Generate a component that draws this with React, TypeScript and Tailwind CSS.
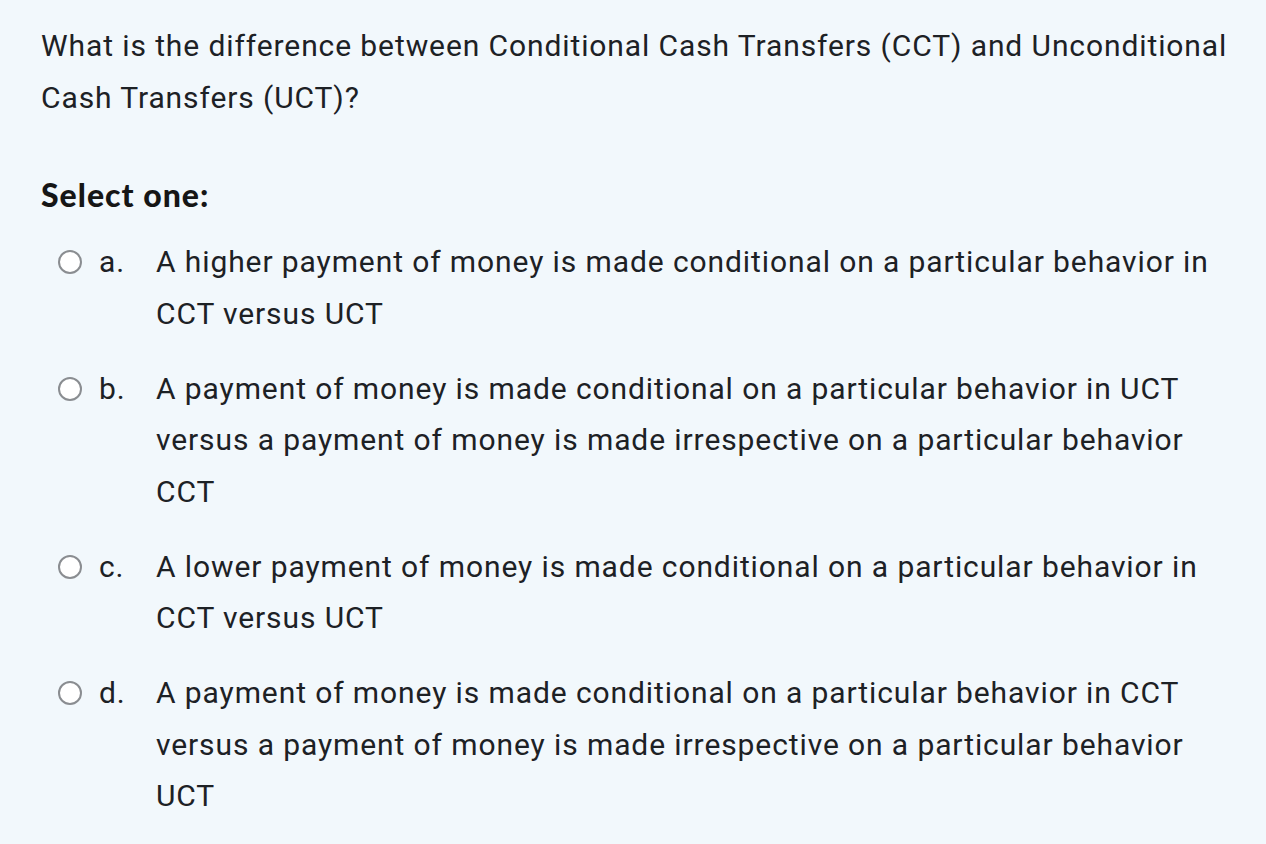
import React from 'react';

const options = [
  { key: 'a', text: 'A higher payment of money is made conditional on a particular behavior in CCT versus UCT' },
  { key: 'b', text: 'A payment of money is made conditional on a particular behavior in UCT versus a payment of money is made irrespective on a particular behavior CCT' },
  { key: 'c', text: 'A lower payment of money is made conditional on a particular behavior in CCT versus UCT' },
  { key: 'd', text: 'A payment of money is made conditional on a particular behavior in CCT versus a payment of money is made irrespective on a particular behavior UCT' },
];

export default function App() {
  return (
    <div className="min-h-[844px] w-full bg-[#f2f8fc] text-[#1d2125] font-['Roboto',sans-serif] tracking-[0.9px]">
      <div className="pl-[41px] pr-[30px] pt-[20px]">
        {/* Question */}
        <p className="text-[30px] leading-[52px]">
          What is the difference between Conditional Cash Transfers (CCT) and Unconditional Cash Transfers (UCT)?
        </p>

        <p className="mt-[45px] font-['Lato',sans-serif] font-black text-[32px] leading-[52px] tracking-[1px] text-[#161616]">
          Select one:
        </p>

        <div className="mt-[15px] flex flex-col gap-[23.5px]">
          {options.map((o) => (
            <label key={o.key} className="flex items-start">
              <span className="h-[52px] flex items-center pl-[17px] pr-[17px]">
                <span className="block h-[24px] w-[24px] rounded-full border-2 border-[#8a8d91] bg-white" />
              </span>
              <span className="w-[57px] text-[30px] leading-[51.5px]">{o.key}.</span>
              <span className="flex-1 text-[30px] leading-[51.5px]">{o.text}</span>
            </label>
          ))}
        </div>
      </div>
    </div>
  );
}
